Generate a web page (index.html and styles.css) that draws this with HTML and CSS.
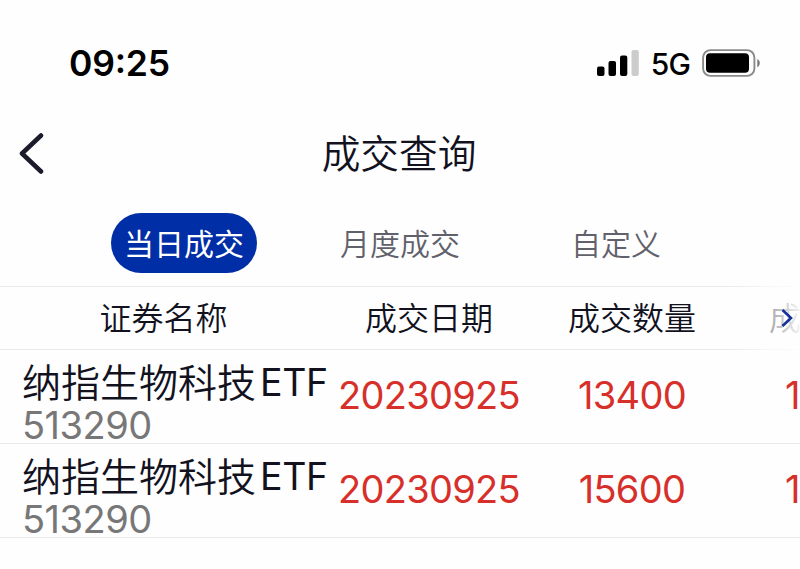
FILE: index.html
```html
<!DOCTYPE html>
<html lang="zh-CN">
<head>
	<meta charset="UTF-8">
	<meta name="viewport" content="width=device-width, initial-scale=1.0">
	<title>成交查询</title>
	<link rel="stylesheet" href="styles.css">
</head>
<body>
	<div class="status">
		<span class="time">09<span class="colon">:</span>25</span>
		<div class="signal">
			<svg width="42" height="28" viewBox="0 0 42 28">
				<rect x="0" y="17.5" width="7.5" height="9.5" rx="2"/>
				<rect x="11.5" y="12" width="7.5" height="15" rx="2"/>
				<rect x="23" y="6.5" width="7.3" height="20.5" rx="2"/>
				<rect x="34.5" y="1" width="7.3" height="26" rx="2" fill="#ccc"/>
			</svg>
			<span class="net">5G</span>
			<svg width="59" height="28" viewBox="0 0 59 28">
				<rect x="1.1" y="1.1" width="51.3" height="25.8" rx="7.5" fill="none" stroke="#8a8a8a" stroke-width="1.9"/>
				<rect x="4" y="4.2" width="43" height="19.6" rx="4"/>
				<path d="M55.3 10c3.300 1.400 3.300 6.800 0 8.200z" fill="#777"/>
			</svg>
		</div>
	</div>

	<div class="navbar">
		<svg class="back" width="28" height="42" viewBox="0 0 28 42">
			<path d="M23 2.500L4 20.500L23 38.500"/>
		</svg>
		<h1>成交查询</h1>
	</div>

	<div class="tabs">
		<span class="tab active">当日成交</span>
		<span class="tab">月度成交</span>
		<span class="tab">自定义</span>
	</div>

	<div class="table">
		<div class="row head">
			<span>证券名称</span>
			<span>成交日期</span>
			<span>成交数量</span>
			<span class="last">成</span>
			<!-- fade + arrow, more columns to the right -->
			<div class="more">
				<svg width="14" height="20" viewBox="0 0 14 20"><path d="M2.500 2L11 10L2.500 18"/></svg>
			</div>
		</div>
		<div class="row">
			<div class="stock"><b>纳指生物科技<i>ETF</i></b><span>513290</span></div>
			<span class="num">20230925</span>
			<span class="num">13400</span>
			<span class="num price">1</span>
		</div>
		<div class="row">
			<div class="stock"><b>纳指生物科技<i>ETF</i></b><span>513290</span></div>
			<span class="num">20230925</span>
			<span class="num">15600</span>
			<span class="num price">1</span>
		</div>
	</div>
</body>
</html>
```

FILE: styles.css
```css
*{
	box-sizing: border-box;
}
body{
	margin: 0;
	width: 800px;
	height: 569px;
	overflow: hidden;
	background-color: #fefefe;
	color: #12121f;
	font-family: Inter, "Noto Sans CJK SC", sans-serif;
}
svg{
	display: block;
}

/* status bar */
.status{
	display: flex;
	justify-content: space-between;
	align-items: center;
	height: 126px;
	padding: 0 39px 0 69px;
	color: #000;
}
.time{
	font-size: 35.5px;
	font-weight: 600;
	letter-spacing: -.2px;
}
.colon{
	vertical-align: 3px;
	line-height: 1;
}
.signal{
	display: flex;
	align-items: center;
}
.net{
	width: 63px;
	padding-top: 2px;
	text-align: center;
	font-size: 30px;
	font-weight: 450;
	letter-spacing: -.7px;
}

/* title */
.navbar{
	display: grid;
	grid-template-columns: 60px 1fr 60px;
	align-items: center;
	height: 56px;
}
.navbar h1{
	margin: 0 2px 0 0;
	text-align: center;
	font-size: 38.7px;
	font-weight: 350;
	line-height: 56px;
}
.back{
	margin-left: 18px;
}
.back path{
	fill: none;
	stroke: #1c1b2b;
	stroke-width: 4.5;
	stroke-linecap: round;
	stroke-linejoin: round;
}

/* tabs */
.tabs{
	display: grid;
	grid-template-columns: repeat(3, 216px);
	justify-content: center;
	justify-items: center;
	padding-top: 31px;
	height: 104px;
}
.tab{
	height: 60px;
	padding: 0 13px;
	border-radius: 30px;
	color: #61616b;
	font-size: 30px;
	font-weight: 350;
	line-height: 62px;
}
.active{
	background-color: #002ea6;
	color: #fff;
	font-weight: 400;
}

/* table */
.row{
	display: grid;
	grid-template-columns: 327px 204px 202px 67px;
	height: 94px;
	border-bottom: 1px solid #e9e9eb;
}
.head{
	position: relative;
	height: 64px;
	border-top: 1px solid #e9e9eb;
	font-size: 32px;
	font-weight: 350;
	line-height: 64px;
	text-align: center;
}
.last{
	padding-left: 36px;
	text-align: left;
}
.more{
	position: absolute;
	top: -1px;
	right: 0;
	display: flex;
	align-items: center;
	justify-content: flex-end;
	width: 75px;
	height: 64px;
	padding-right: 6px;
	background: linear-gradient(to right, rgba(254,254,254,0), rgba(254,254,254,.6) 55%, rgba(254,254,254,.95));
}
.more path{
	fill: none;
	stroke: #16309c;
	stroke-width: 2.6;
}
.stock{
	padding: 10px 0 0 22px;
	white-space: nowrap;
}
.stock b{
	display: block;
	height: 46px;
	font-size: 39px;
	font-weight: 350;
	line-height: 45px;
}
.stock i{
	margin-left: 4px;
	font-size: 37.5px;
	font-style: normal;
	font-weight: 400;
	letter-spacing: -.4px;
	vertical-align: 1px;
}
.stock span{
	display: block;
	color: #777;
	font-size: 38px;
	letter-spacing: -.5px;
	line-height: 38px;
}
.num{
	color: #d7302b;
	font-size: 38px;
	letter-spacing: -.7px;
	line-height: 91px;
	text-align: center;
}
.price{
	padding-left: 52px;
	text-align: left;
}
```
